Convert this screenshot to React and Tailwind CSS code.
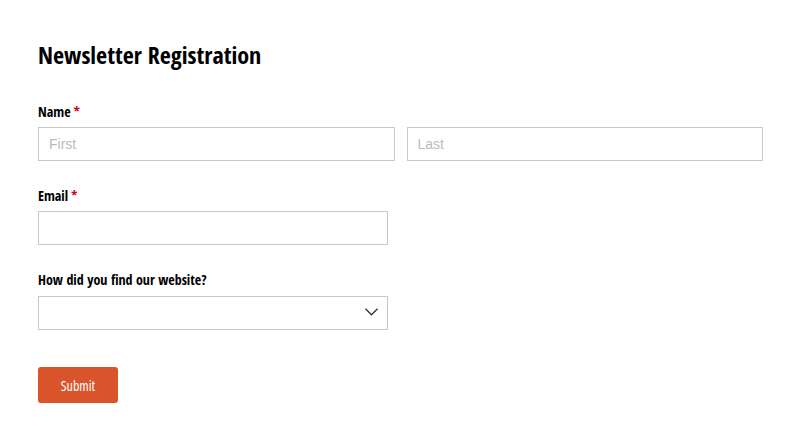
import React from "react";

const condensed = {
  fontFamily: '"Open Sans Condensed", "Open Sans", "Liberation Sans Narrow", sans-serif',
};

const Label = ({ children, required }) => (
  <div
    className="h-5 text-[14px] leading-5 font-bold text-black font-stretch-[75%]"
    style={condensed}
  >
    {children}
    {required && <span className="ml-[3px] text-[#d0021b]">*</span>}
  </div>
);

const inputCls =
  "h-[34px] w-full border border-[#c8c8c8] bg-white px-[10px] text-[14px] text-black placeholder:text-[#bbbbbb] outline-none font-['Liberation_Sans',Arial,sans-serif]";

export default function App() {
  return (
    <div className="min-h-screen w-[800px] bg-white pl-[38px] pr-[37px] pt-[39px]">
      <h1
        className="h-8 text-[24px] leading-8 font-bold text-black font-stretch-[75%]"
        style={condensed}
      >
        Newsletter Registration
      </h1>

      {/* Name */}
      <div className="mt-[31px]">
        <Label required>Name</Label>
        <div className="mt-[5px] flex gap-3">
          <input className={inputCls} placeholder="First" />
          <input className={inputCls} placeholder="Last" />
        </div>
      </div>

      {/* Email */}
      <div className="mt-[25px] w-[350px]">
        <Label required>Email</Label>
        <input className={`${inputCls} mt-[5px]`} />
      </div>

      {/* Source */}
      <div className="mt-[25px] w-[350px]">
        <Label>How did you find our website?</Label>
        <div className="relative mt-[6px]">
          <select className={`${inputCls} appearance-none`} defaultValue="">
            <option value=""></option>
          </select>
          <svg
            className="pointer-events-none absolute right-[10px] top-[12px]"
            width="13"
            height="8"
            viewBox="0 0 13 8"
            fill="none"
          >
            <path d="M0.5 0.8 L6.5 6.8 L12.5 0.8" stroke="#333" strokeWidth="1.3" />
          </svg>
        </div>
      </div>

      <button className="mt-[37px] h-9 w-20 rounded-[3px] bg-[#d9542b] text-[14px] font-normal text-white font-stretch-[75%] font-['Open_Sans',sans-serif]">
        Submit
      </button>
    </div>
  );
}
